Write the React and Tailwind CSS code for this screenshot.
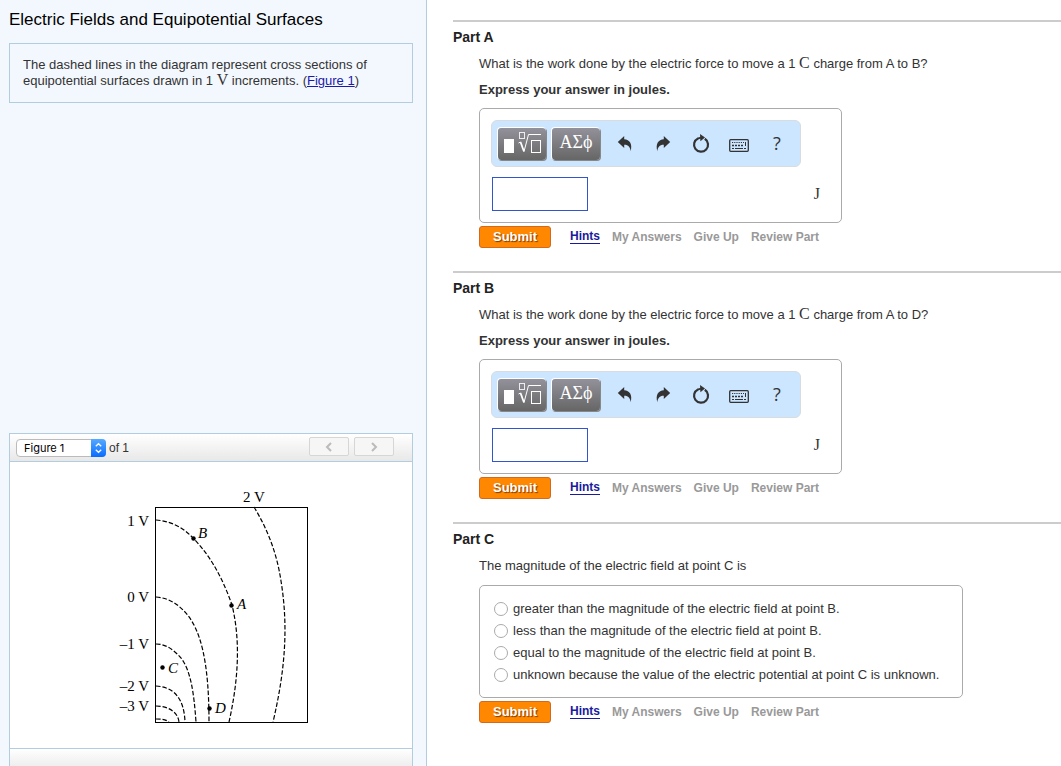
import React, { useState } from 'react';

const links = ['My Answers', 'Give Up', 'Review Part'];

const choices = [
    'greater than the magnitude of the electric field at point B.',
    'less than the magnitude of the electric field at point B.',
    'equal to the magnitude of the electric field at point B.',
    'unknown because the value of the electric potential at point C is unknown.',
];

// Equipotential lines, one path per voltage
const curves = [
    'M244 45 C258 68 267 92 271 119 C278 162 276 205 263 260',
    'M146 58 C160 59 173 65 183 76 C202 95 214 120 222 143 C231 180 228 220 219 260',
    'M146 135 C158 136 166 141 173 148 C192 166 199 204 199 260',
    'M146 182 C156 182 164 188 171 196 C181 209 184 232 186 260',
    'M146 224 C162 225 174 234 175 260',
    'M146 244 C158 244 168 250 169 260',
    'M146 257 C151 257 155 257 159 260',
];

const voltages = [
    { text: '1 V', y: 64 },
    { text: '0 V', y: 140 },
    { text: '–1 V', y: 187 },
    { text: '–2 V', y: 229 },
    { text: '–3 V', y: 249 },
];

const points = [
    { name: 'B', x: 183, y: 76, tx: 188, ty: 76 },
    { name: 'A', x: 221, y: 143, tx: 227, ty: 147 },
    { name: 'C', x: 152, y: 205, tx: 158, ty: 211 },
    { name: 'D', x: 199, y: 246, tx: 205, ty: 251 },
];

function Diagram() {
    return (
        <svg viewBox="0 0 402 286" className="block w-full" role="img" fontFamily="'Liberation Serif', serif" fontSize="15">
            <rect x="145.5" y="45.5" width="152" height="215" fill="none" stroke="#000" />
            {curves.map(d => (
                <path key={d} d={d} fill="none" stroke="#000" strokeWidth="1.2" strokeDasharray="4.5 2" />
            ))}
            {voltages.map(v => (
                <text key={v.text} x="139" y={v.y} textAnchor="end">{v.text}</text>
            ))}
            <text x="233" y="40">2 V</text>
            {points.map(p => (
                <g key={p.name}>
                    <circle cx={p.x + 0.5} cy={p.y + 0.5} r="2.2" />
                    <text x={p.tx} y={p.ty} fontStyle="italic">{p.name}</text>
                </g>
            ))}
        </svg>
    );
}

function Unit({ children }) {
    return <span className="font-['Liberation_Serif',serif] text-[16px] leading-3">{children}</span>;
}

function RootIcon() {
    return (
        <svg width="48" height="32" viewBox="1 1 48 32" fill="none" stroke="#fff" className="block">
            <rect x="7" y="12" width="10" height="14" fill="#fff" stroke="none" />
            <rect x="22.5" y="5.5" width="5" height="6" opacity="0.85" />
            <path d="M21.5 16 L23.5 15" />
            <path d="M23.5 15 L27 24.5" strokeWidth="1.8" />
            <path d="M27 24.5 L31.5 7.5 H44" />
            <rect x="34.5" y="13.5" width="9" height="12" />
        </svg>
    );
}

function UndoIcon({ flip }) {
    return (
        <svg width="16" height="18" viewBox="0 0 16 18" fill="#333" className={flip ? '-scale-x-100' : ''}>
            <path d="M0.8 7 L7.2 1 V4.3 C12.5 4.5 15.8 9 13.6 16.3 C13.4 12.2 11 9.6 7.2 9.8 V13 Z" />
        </svg>
    );
}

function ResetIcon() {
    return (
        <svg width="18" height="20" viewBox="0 0 18 20" fill="none">
            <path d="M12.8 4.8 A7 7 0 1 1 6 4.4" stroke="#333" strokeWidth="2.2" />
            <path d="M8 0 L13 3.4 L8.4 7.2 Z" fill="#333" />
            <path d="M5.4 4.6 L9 3.6" stroke="#333" strokeWidth="2" />
        </svg>
    );
}

function KeyboardIcon() {
    return (
        <svg width="20" height="13" viewBox="0 0 20 13" fill="none" stroke="#333">
            <rect x="0.7" y="0.7" width="18.6" height="11.6" rx="1" strokeWidth="1.3" />
            <path d="M3 3.5 H15" strokeDasharray="1.2 1" />
            <path d="M3 6.5 H14" strokeDasharray="2 1" strokeWidth="1.4" />
            <path d="M16.5 3 V7" />
            <path d="M3 9.5 H5 M6 9.5 H14 M15 9.5 H17" strokeWidth="1.2" />
        </svg>
    );
}

function Actions() {
    return (
        <div className="flex items-center mt-[3px] text-[12px] font-bold">
            <button className="w-[72px] h-[22px] shrink-0 rounded-[3px] border border-[#d2691e] bg-[#ff8800] text-[13px] leading-4 text-white [text-shadow:1px_1px_1px_#7a3a00]">
                Submit
            </button>
            <a href="#hints" className="ml-[19px] leading-[13px] border-b border-[#1a1a9c] text-[#1a1a9c]">Hints</a>
            {links.map(l => (
                <a key={l} href="#parts" className="ml-3 leading-[14px] text-[#999]">{l}</a>
            ))}
        </div>
    );
}

function AnswerBox({ label }) {
    const [value, setValue] = useState('');
    const padBtn = "w-[49px] h-[33px] shrink-0 rounded-[4px] border-t border-l border-white bg-linear-to-b from-[#93929b] to-[#666] shadow-[1px_1px_0_#888] text-white overflow-hidden";
    const iconBtn = "w-[38px] h-[33px] flex items-center justify-center";

    return (
        <div className="mt-[10px] max-w-[363px] rounded-[5px] border border-[#aaa] p-[11px]">
            <div className="flex items-center max-w-[310px] h-[47px] pl-[5px] rounded-[6px] border border-[#d8dce0] bg-[#cce6ff]">
                <button aria-label="Templates" className={padBtn}><RootIcon /></button>
                <button aria-label="Symbols" className={padBtn + " ml-[5px] pb-1 font-['Liberation_Serif',serif] text-[18px] leading-none"}>ΑΣϕ</button>
                <button aria-label="Undo" className={iconBtn + ' ml-[6px]'}><UndoIcon /></button>
                <button aria-label="Redo" className={iconBtn}><UndoIcon flip /></button>
                <button aria-label="Reset" className={iconBtn}><ResetIcon /></button>
                <button aria-label="Keyboard" className={iconBtn + ' pt-1'}><KeyboardIcon /></button>
                <button aria-label="Help" className={iconBtn + " font-['Open_Sans',sans-serif] text-[18px] text-[#333]"}>?</button>
            </div>
            <div className="flex items-center justify-between mt-[10px] pr-[10px]">
                <input
                    aria-label={label}
                    className="w-24 h-[34px] ml-px px-2 border border-[#3355cc] outline-none"
                    value={value}
                    onChange={e => setValue(e.target.value)}
                />
                <Unit>J</Unit>
            </div>
        </div>
    );
}

function Part({ title, question, children }) {
    return (
        <section className="border-t-2 border-[#ccc] pt-[7px] mb-[23px]">
            <h2 className="text-[14px] leading-4 font-bold text-[#222]">{title}</h2>
            <div className="pl-[26px] pr-4 mt-[11px]">
                <p className="leading-4">{question}</p>
                {children}
                <Actions />
            </div>
        </section>
    );
}

function WorkPart({ title, to }) {
    return (
        <Part
            title={title}
            question={<>What is the work done by the electric force to move a 1 <Unit>C</Unit> charge from A to {to}?</>}
        >
            <p className="mt-[10px] leading-4 font-bold">Express your answer in joules.</p>
            <AnswerBox label={title + ' answer'} />
        </Part>
    );
}

export default function App() {
    const [choice, setChoice] = useState(null);
    const navBtn = "w-10 h-[19px] flex items-center justify-center rounded-[2px] border border-[#d6d6d6] bg-[#f6f6f6]";

    return (
        <div className="flex min-h-screen bg-white font-['Liberation_Sans',sans-serif] text-[13px] text-[#333]">
            <aside className="w-[427px] shrink-0 flex flex-col justify-between border-r border-[#b3cde0] bg-[#f3f8fe] pl-[9px] pr-[13px]">
                <div>
                    <h1 className="mt-[10px] text-[17px] leading-5 text-black">Electric Fields and Equipotential Surfaces</h1>
                    <p className="mt-[13px] p-[13px] border border-[#b3cde0] leading-4">
                        The dashed lines in the diagram represent cross sections of equipotential surfaces drawn in 1 <Unit>V</Unit> increments. (<a href="#figure" className="text-[#1a1aaa] underline">Figure 1</a>)
                    </p>
                </div>

                <div id="figure" className="border-x border-t border-[#b3cde0] bg-white">
                    <div className="flex items-center h-7 pl-[6px] pr-[18px] border-b border-[#b3cde0] bg-linear-to-b from-white to-[#e8e8e8]">
                        <div className="relative">
                            <select aria-label="Figure" className="block appearance-none w-[90px] h-[18px] pl-[7px] rounded-[4px] border border-[#bbb] bg-white font-[Inter,sans-serif] text-[11px] leading-4 text-black">
                                <option>Figure 1</option>
                            </select>
                            <svg className="absolute right-0 top-0 pointer-events-none" width="15" height="18" viewBox="0 0 15 18">
                                <defs>
                                    <linearGradient id="stepper" x1="0" y1="0" x2="0" y2="1">
                                        <stop offset="0" stopColor="#55aaff" />
                                        <stop offset="1" stopColor="#0a6cff" />
                                    </linearGradient>
                                </defs>
                                <path d="M0 0 H11 Q15 0 15 4 V14 Q15 18 11 18 H0 Z" fill="url(#stepper)" />
                                <path d="M4.8 7.3 L7.5 4.7 L10.2 7.3 M4.8 10.7 L7.5 13.3 L10.2 10.7" fill="none" stroke="#fff" strokeWidth="1.3" />
                            </svg>
                        </div>
                        <span className="ml-[3px] text-[12px]">of 1</span>
                        <div className="flex gap-[5px] ml-auto mb-[2px]">
                            <button aria-label="Previous figure" className={navBtn}>
                                <svg width="8" height="10" viewBox="0 0 8 10" fill="none" stroke="#bbb" strokeWidth="2"><path d="M6 1 L2 5 L6 9" /></svg>
                            </button>
                            <button aria-label="Next figure" className={navBtn}>
                                <svg width="8" height="10" viewBox="0 0 8 10" fill="none" stroke="#bbb" strokeWidth="2"><path d="M2 1 L6 5 L2 9" /></svg>
                            </button>
                        </div>
                    </div>
                    <Diagram />
                    <div className="h-[18px] border-t border-[#b3cde0] bg-linear-to-b from-white to-[#eee]"></div>
                </div>
            </aside>

            <main className="flex-1 min-w-0 pl-[26px] pt-5">
                <WorkPart title="Part A" to="B" />
                <WorkPart title="Part B" to="D" />
                <Part title="Part C" question="The magnitude of the electric field at point C is">
                    <div className="mt-[11px] max-w-[484px] rounded-[5px] border border-[#aaa] px-[14px] pt-3 pb-[11px]">
                        {choices.map((c, i) => (
                            <label key={c} className="flex items-center h-[22px]">
                                <input
                                    type="radio"
                                    name="partC"
                                    className="appearance-none size-[14px] mr-[5px] shrink-0 rounded-full border border-[#aaa] bg-white checked:border-4 checked:border-[#0a6cff]"
                                    checked={choice === i}
                                    onChange={() => setChoice(i)}
                                />
                                {c}
                            </label>
                        ))}
                    </div>
                </Part>
            </main>
        </div>
    );
}
